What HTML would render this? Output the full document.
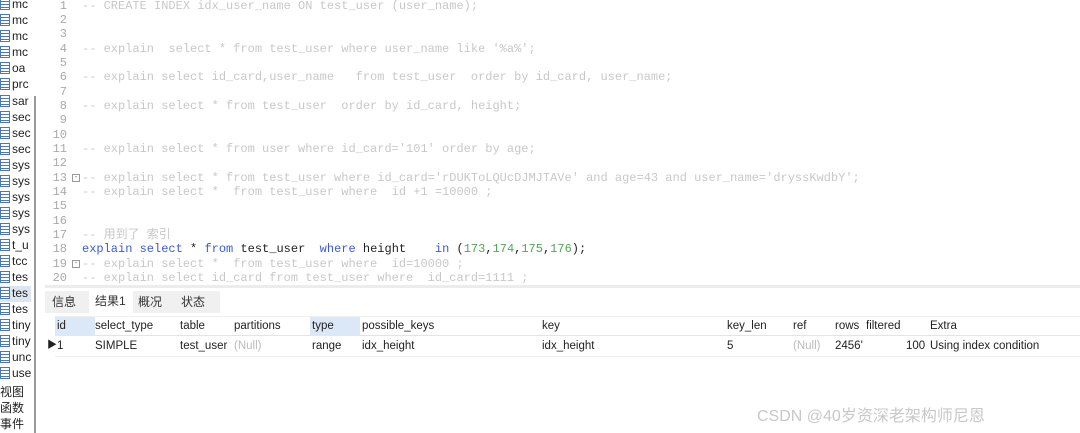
<!DOCTYPE html>
<html><head><meta charset="utf-8"><style>
*{margin:0;padding:0;box-sizing:border-box}
body{width:1080px;height:433px;overflow:hidden;background:#fff;position:relative;font-family:"Liberation Sans","Noto Sans CJK SC",sans-serif}
.side{position:absolute;left:0;top:0;width:36px;height:433px;background:#fff}
.si{position:absolute;left:0;height:16px;font-size:12px;color:#222;white-space:nowrap;overflow:hidden;width:31px}
.ic{display:inline-block;width:10px;height:12px;border:1px solid #4a78b8;background:repeating-linear-gradient(#fff 0 2px,#4a78b8 2px 3px);vertical-align:-2px;margin-right:2px}
.vbar{position:absolute;left:34px;top:96px;width:2px;height:337px;background:#999}
.code{position:absolute;left:0;top:2px;font-family:"Liberation Mono","Noto Sans CJK SC",monospace;font-size:12px}
.ln{position:absolute;left:40px;width:27px;text-align:right;color:#aaa;height:14px;line-height:14px}
.tx{position:absolute;left:82px;color:#c8c8c8;white-space:pre;height:14px;line-height:14px}
.k{color:#3b5bd6}.n{color:#54a654}.b{color:#222}
.fold{position:absolute;left:72px;width:8px;height:8px;border:1px solid #999;font-size:8px;line-height:6px;text-align:center;color:#777}
.res{position:absolute;left:45px;top:285px;width:1035px;height:148px;background:#fff;border-top:3px solid #ececec}
.tabs{position:absolute;left:0;top:3px;height:22px;background:#f0f0f0;width:175px}
.tab{position:absolute;top:1px;font-size:12px;color:#333;height:20px;line-height:20px}
.hdr{position:absolute;left:10px;top:28px;height:20px;width:1025px;border-bottom:1px solid #e4e4e4;border-top:1px solid #eee}
.cell{position:absolute;font-size:11.5px;color:#222;line-height:18px;white-space:nowrap}
.null{color:#bbb}
</style></head><body>
<div class="side">
<div class="si" style="top:-3px"><span class="ic"></span>mc</div>
<div class="si" style="top:13px"><span class="ic"></span>mc</div>
<div class="si" style="top:29px"><span class="ic"></span>mc</div>
<div class="si" style="top:45px"><span class="ic"></span>mc</div>
<div class="si" style="top:61px"><span class="ic"></span>oa</div>
<div class="si" style="top:77px"><span class="ic"></span>prc</div>
<div class="si" style="top:94px"><span class="ic"></span>sar</div>
<div class="si" style="top:110px"><span class="ic"></span>sec</div>
<div class="si" style="top:126px"><span class="ic"></span>sec</div>
<div class="si" style="top:142px"><span class="ic"></span>sec</div>
<div class="si" style="top:158px"><span class="ic"></span>sys</div>
<div class="si" style="top:174px"><span class="ic"></span>sys</div>
<div class="si" style="top:190px"><span class="ic"></span>sys</div>
<div class="si" style="top:206px"><span class="ic"></span>sys</div>
<div class="si" style="top:222px"><span class="ic"></span>sys</div>
<div class="si" style="top:238px"><span class="ic"></span>t_u</div>
<div class="si" style="top:254px"><span class="ic"></span>tcc</div>
<div class="si" style="top:270px"><span class="ic"></span>tes</div>
<div class="si" style="top:286px;background:#dde6f0"><span class="ic"></span>tes</div>
<div class="si" style="top:302px"><span class="ic"></span>tes</div>
<div class="si" style="top:318px"><span class="ic"></span>tiny</div>
<div class="si" style="top:334px"><span class="ic"></span>tiny</div>
<div class="si" style="top:350px"><span class="ic"></span>unc</div>
<div class="si" style="top:366px"><span class="ic"></span>use</div>
<div class="si" style="top:383px">视图</div>
<div class="si" style="top:399px">函数</div>
<div class="si" style="top:415px">事件</div>
</div>
<div class="vbar"></div>
<div class="code">
<div class="ln" style="top:-3px">1</div><div class="tx" style="top:-3px">-- CREATE INDEX idx_user_name ON test_user (user_name);</div>
<div class="ln" style="top:11px">2</div>
<div class="ln" style="top:25px">3</div>
<div class="ln" style="top:40px">4</div><div class="tx" style="top:40px">-- explain  select * from test_user where user_name like '%a%';</div>
<div class="ln" style="top:54px">5</div>
<div class="ln" style="top:68px">6</div><div class="tx" style="top:68px">-- explain select id_card,user_name   from test_user  order by id_card, user_name;</div>
<div class="ln" style="top:83px">7</div>
<div class="ln" style="top:97px">8</div><div class="tx" style="top:97px">-- explain select * from test_user  order by id_card, height;</div>
<div class="ln" style="top:111px">9</div>
<div class="ln" style="top:126px">10</div>
<div class="ln" style="top:140px">11</div><div class="tx" style="top:140px">-- explain select * from user where id_card='101' order by age;</div>
<div class="ln" style="top:154px">12</div>
<div class="ln" style="top:169px">13</div><div class="fold" style="top:172px">-</div><div class="tx" style="top:169px">-- explain select * from test_user where id_card='rDUKToLQUcDJMJTAVe' and age=43 and user_name='dryssKwdbY';</div>
<div class="ln" style="top:183px">14</div><div class="tx" style="top:183px">-- explain select *  from test_user where  id +1 =10000 ;</div>
<div class="ln" style="top:197px">15</div>
<div class="ln" style="top:212px">16</div>
<div class="ln" style="top:226px">17</div><div class="tx" style="top:226px">-- 用到了 索引</div>
<div class="ln" style="top:240px">18</div><div class="tx" style="top:240px"><span class="k">explain select</span> <span class="b">* </span><span class="k">from</span> <span class="b">test_user</span>  <span class="k">where</span> <span class="b">height</span>    <span class="k">in</span> <span class="b">(</span><span class="n">173</span><span class="b">,</span><span class="n">174</span><span class="b">,</span><span class="n">175</span><span class="b">,</span><span class="n">176</span><span class="b">);</span></div>
<div class="ln" style="top:255px">19</div><div class="fold" style="top:258px">-</div><div class="tx" style="top:255px">-- explain select *  from test_user where  id=10000 ;</div>
<div class="ln" style="top:269px">20</div><div class="tx" style="top:269px">-- explain select id_card from test_user where  id_card=1111 ;</div>
</div>
<div class="res">
<div class="tabs">
<div class="tab" style="left:7px">信息</div>
<div class="tab" style="left:44px;top:0;background:#fff;width:44px;height:22px;padding-left:6px">结果1</div>
<div class="tab" style="left:93px">概况</div>
<div class="tab" style="left:136px">状态</div>
</div>
<div class="hdr"></div>
<div style="position:absolute;left:10px;top:29px;width:40px;height:19px;background:#dbe8f7"></div>
<div style="position:absolute;left:265px;top:29px;width:50px;height:19px;background:#dbe8f7"></div>
<div class="cell" style="left:12px;top:29px">id</div>
<div class="cell" style="left:50px;top:29px">select_type</div>
<div class="cell" style="left:135px;top:29px">table</div>
<div class="cell" style="left:189px;top:29px">partitions</div>
<div class="cell" style="left:267px;top:29px">type</div>
<div class="cell" style="left:317px;top:29px">possible_keys</div>
<div class="cell" style="left:497px;top:29px">key</div>
<div class="cell" style="left:682px;top:29px">key_len</div>
<div class="cell" style="left:748px;top:29px">ref</div>
<div class="cell" style="left:790px;top:29px">rows</div>
<div class="cell" style="left:821px;top:29px">filtered</div>
<div class="cell" style="left:885px;top:29px">Extra</div>
<div style="position:absolute;left:10px;top:68px;width:1025px;border-top:1px solid #eee"></div>
<div class="cell" style="left:2px;top:49px;font-size:10px">▶</div>
<div class="cell" style="left:12px;top:49px">1</div>
<div class="cell" style="left:50px;top:49px">SIMPLE</div>
<div class="cell" style="left:135px;top:49px">test_user</div>
<div class="cell null" style="left:189px;top:49px">(Null)</div>
<div class="cell" style="left:267px;top:49px">range</div>
<div class="cell" style="left:317px;top:49px">idx_height</div>
<div class="cell" style="left:497px;top:49px">idx_height</div>
<div class="cell" style="left:682px;top:49px">5</div>
<div class="cell null" style="left:748px;top:49px">(Null)</div>
<div class="cell" style="left:790px;top:49px">2456'</div>
<div class="cell" style="left:861px;top:49px">100</div>
<div class="cell" style="left:885px;top:49px">Using index condition</div>
</div>
<div style="position:absolute;left:757px;top:402px;font-size:16px;color:#c8c8c8;white-space:nowrap">CSDN @40岁资深老架构师尼恩</div>
</body></html>
